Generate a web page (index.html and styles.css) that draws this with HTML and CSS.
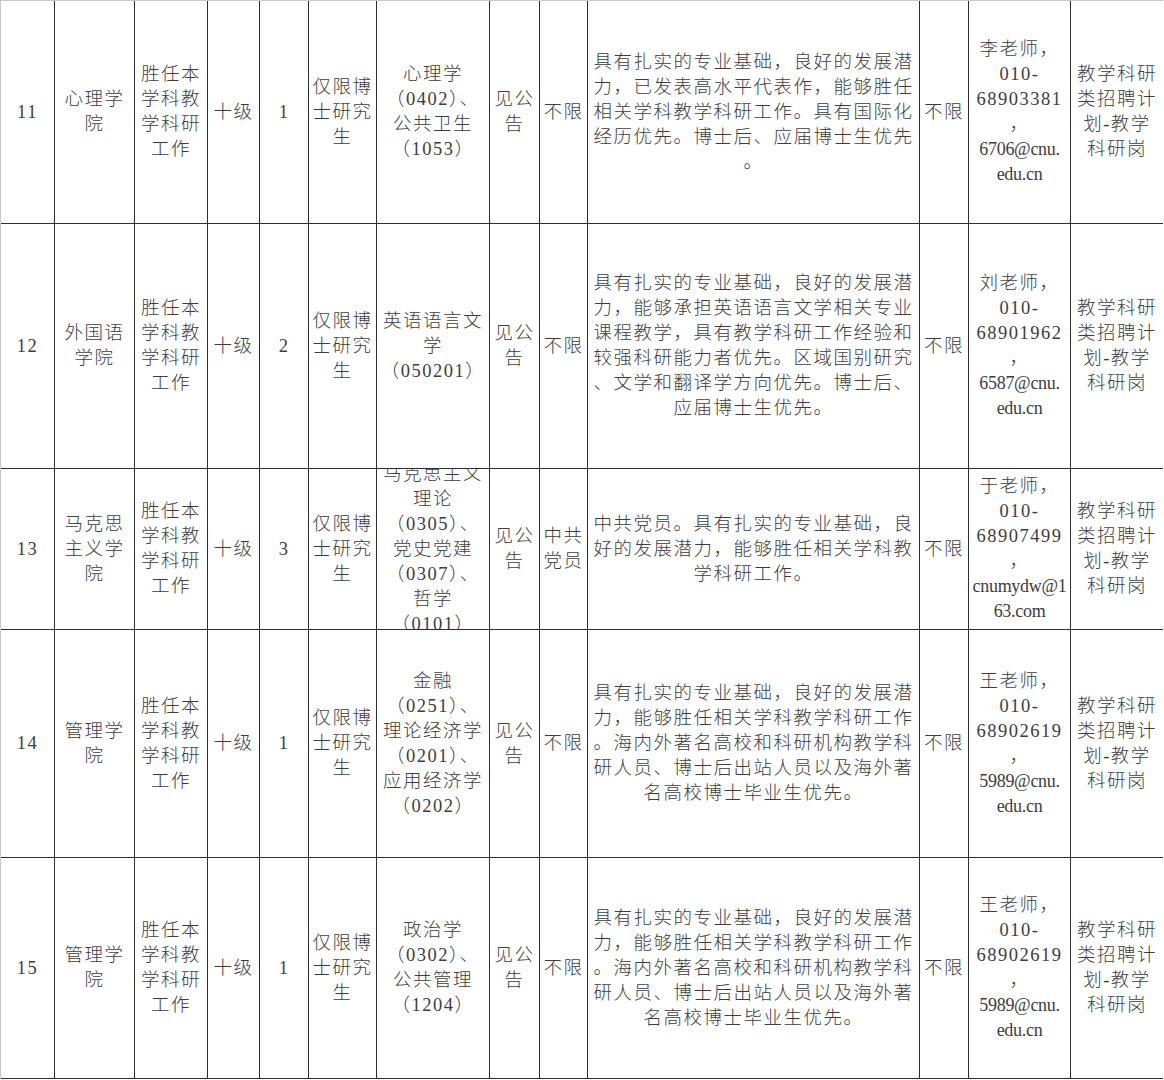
FILE: index.html
```html
<!DOCTYPE html>
<html lang="zh-CN">
<head>
<meta charset="utf-8">
<title>招聘岗位表</title>
<link rel="stylesheet" href="styles.css">
</head>
<body>
<div class="sheet">
  <!-- row 11 -->
  <div class="cell">11</div>
  <div class="cell">心理学院</div>
  <div class="cell">胜任本学科教学科研工作</div>
  <div class="cell">十级</div>
  <div class="cell">1</div>
  <div class="cell">仅限博士研究生</div>
  <div class="cell">心理学（0402）、公共卫生（1053）</div>
  <div class="cell">见公告</div>
  <div class="cell">不限</div>
  <div class="cell desc">具有扎实的专业基础，良好的发展潜力，已发表高水平代表作，能够胜任相关学科教学科研工作。具有国际化经历优先。博士后、应届博士生优先。</div>
  <div class="cell">不限</div>
  <div class="cell contact"><div class="lines">李老师，<br>010-<br>68903381<br>，<br><span class="mail">6706@cnu.</span><br><span class="mail">edu.cn</span></div></div>
  <div class="cell plan">教学科研类招聘计划-教学科研岗</div>

  <!-- row 12 -->
  <div class="cell">12</div>
  <div class="cell">外国语学院</div>
  <div class="cell">胜任本学科教学科研工作</div>
  <div class="cell">十级</div>
  <div class="cell">2</div>
  <div class="cell">仅限博士研究生</div>
  <div class="cell">英语语言文学（050201）</div>
  <div class="cell">见公告</div>
  <div class="cell">不限</div>
  <div class="cell desc">具有扎实的专业基础，良好的发展潜力，能够承担英语语言文学相关专业课程教学，具有教学科研工作经验和较强科研能力者优先。区域国别研究、文学和翻译学方向优先。博士后、应届博士生优先。</div>
  <div class="cell">不限</div>
  <div class="cell contact"><div class="lines">刘老师，<br>010-<br>68901962<br>，<br><span class="mail">6587@cnu.</span><br><span class="mail">edu.cn</span></div></div>
  <div class="cell plan">教学科研类招聘计划-教学科研岗</div>

  <!-- row 13 -->
  <div class="cell">13</div>
  <div class="cell">马克思主义学院</div>
  <div class="cell">胜任本学科教学科研工作</div>
  <div class="cell">十级</div>
  <div class="cell">3</div>
  <div class="cell">仅限博士研究生</div>
  <div class="cell">马克思主义理论（0305）、党史党建（0307）、哲学（0101）</div>
  <div class="cell">见公告</div>
  <div class="cell">中共党员</div>
  <div class="cell desc">中共党员。具有扎实的专业基础，良好的发展潜力，能够胜任相关学科教学科研工作。</div>
  <div class="cell">不限</div>
  <div class="cell contact"><div class="lines">于老师，<br>010-<br>68907499<br>，<br><span class="mail">cnumydw@1</span><br><span class="mail">63.com</span></div></div>
  <div class="cell plan">教学科研类招聘计划-教学科研岗</div>

  <!-- row 14 -->
  <div class="cell">14</div>
  <div class="cell">管理学院</div>
  <div class="cell">胜任本学科教学科研工作</div>
  <div class="cell">十级</div>
  <div class="cell">1</div>
  <div class="cell">仅限博士研究生</div>
  <div class="cell">金融（0251）、理论经济学（0201）、应用经济学（0202）</div>
  <div class="cell">见公告</div>
  <div class="cell">不限</div>
  <div class="cell desc">具有扎实的专业基础，良好的发展潜力，能够胜任相关学科教学科研工作。海内外著名高校和科研机构教学科研人员、博士后出站人员以及海外著名高校博士毕业生优先。</div>
  <div class="cell">不限</div>
  <div class="cell contact"><div class="lines">王老师，<br>010-<br>68902619<br>，<br><span class="mail">5989@cnu.</span><br><span class="mail">edu.cn</span></div></div>
  <div class="cell plan">教学科研类招聘计划-教学科研岗</div>

  <!-- row 15 -->
  <div class="cell">15</div>
  <div class="cell">管理学院</div>
  <div class="cell">胜任本学科教学科研工作</div>
  <div class="cell">十级</div>
  <div class="cell">1</div>
  <div class="cell">仅限博士研究生</div>
  <div class="cell">政治学（0302）、公共管理（1204）</div>
  <div class="cell">见公告</div>
  <div class="cell">不限</div>
  <div class="cell desc">具有扎实的专业基础，良好的发展潜力，能够胜任相关学科教学科研工作。海内外著名高校和科研机构教学科研人员、博士后出站人员以及海外著名高校博士毕业生优先。</div>
  <div class="cell">不限</div>
  <div class="cell contact"><div class="lines">王老师，<br>010-<br>68902619<br>，<br><span class="mail">5989@cnu.</span><br><span class="mail">edu.cn</span></div></div>
  <div class="cell plan">教学科研类招聘计划-教学科研岗</div>
</div>
</body>
</html>
```

FILE: styles.css
```css
html, body {
  margin: 0;
  padding: 0;
  background: #ffffff;
}

body {
  font-family: "Liberation Serif", "Noto Sans CJK SC", serif;
  font-size: 18.5px;
  line-height: 25px;
  letter-spacing: 1.5px;
  color: #3d3d3d;
}

.sheet {
  display: grid;
  grid-template-columns: 53px 79px 72px 51px 48px 67px 112px 49px 47px 331px 48px 101px 92px;
  grid-template-rows: 222px 244px 160px 227px 220px;
  gap: 1px;
  width: 1163px;
  background: #2e2e2e;
  border-top: 1px solid #c9c9c9;
  border-left: 1px solid #c9c9c9;
  padding: 0 1px 1px 0;
  box-sizing: border-box;
}

.cell {
  background: #ffffff;
  display: flex;
  align-items: center;
  justify-content: center;
  text-align: center;
  overflow: hidden;
  padding: 0 3px;
  font-weight: 300;
}

.desc {
  line-break: anywhere;
}

.contact {
  padding: 0 2px;
}

.lines {
  white-space: nowrap;
}

.mail {
  font-size: 18px;
  letter-spacing: -0.3px;
}

.plan {
  padding: 0 5px;
}
```
